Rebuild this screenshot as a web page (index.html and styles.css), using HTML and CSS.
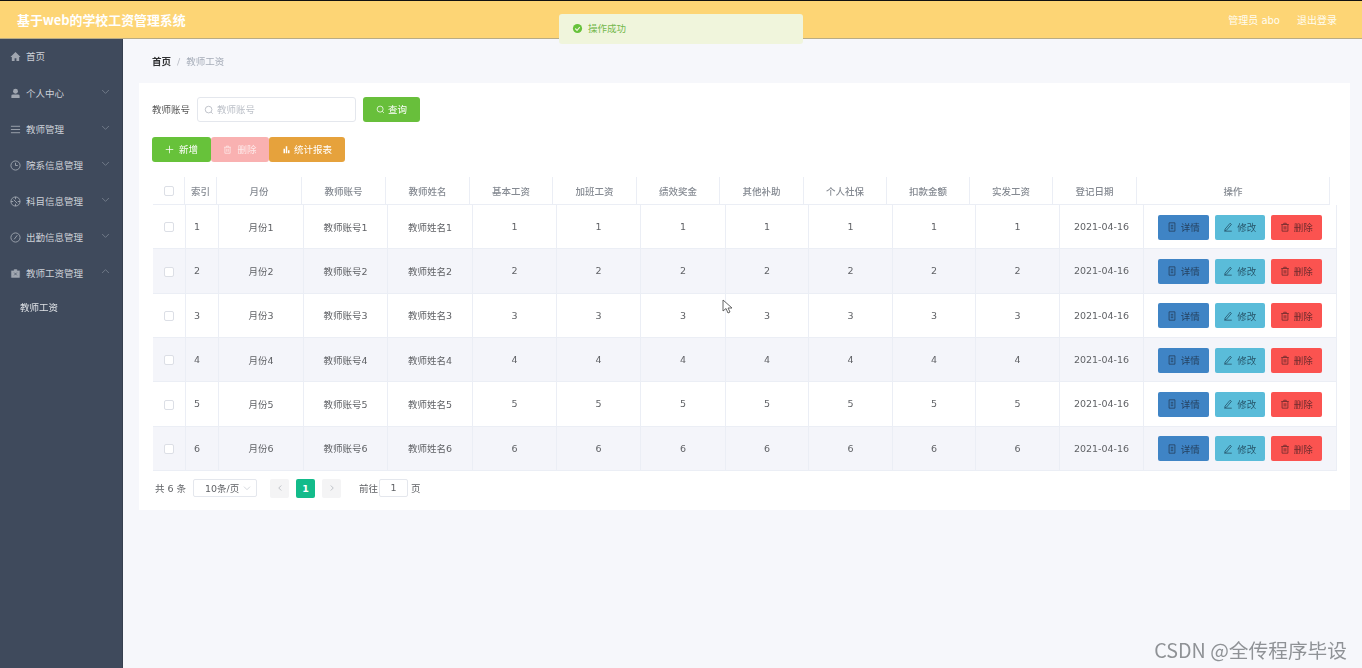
FILE: index.html
```html
<!DOCTYPE html>
<html lang="zh-CN">
<head>
  <meta charset="UTF-8">
  <meta name="viewport" content="width=device-width, initial-scale=1.0">
  <title>教师工资</title>
  <link rel="stylesheet" href="styles.css">
</head>
<body>
  <svg class="sprites" aria-hidden="true">
    <symbol id="i-doc" viewBox="0 0 12 12"><path d="M2.500 1h7v10h-7zM4.500 4h3M4.500 6h3M4.500 8h3" fill="none" stroke="currentColor"/></symbol>
    <symbol id="i-edit" viewBox="0 0 12 12"><path d="M2.500 8.500 8.500 1.500l1.600 1.400-6 7-2 .4zM1.500 11h9" fill="none" stroke="currentColor"/></symbol>
    <symbol id="i-del" viewBox="0 0 12 12"><path d="M1.500 3h9M4.500 3V1.500h3V3M2.500 3v8h7V3M5 5v4M7 5v4" fill="none" stroke="currentColor"/></symbol>
    <symbol id="i-search" viewBox="0 0 12 12"><circle cx="5.500" cy="5.500" r="4" fill="none" stroke="currentColor"/><path d="m8.500 8.500 2 2" stroke="currentColor"/></symbol>
    <symbol id="i-down" viewBox="0 0 12 12"><path d="m1.500 4 4.500 4.500L10.500 4" fill="none" stroke="currentColor"/></symbol>
    <symbol id="i-up" viewBox="0 0 12 12"><path d="M1.500 8 6 3.500 10.500 8" fill="none" stroke="currentColor"/></symbol>
  </svg>

  <header class="topbar">
    <div class="topbar-title">基于web的学校工资管理系统</div>
    <div class="topbar-user">
      <span>管理员 abo</span>
      <span>退出登录</span>
    </div>
  </header>

  <div class="layout">
    <aside class="sidebar">
      <div class="menu-item">
        <svg class="menu-icon" viewBox="0 0 12 12"><path d="M6 1 .5 6.500H2V11h3V8h2v3h3V6.500h1.500z" fill="currentColor"/></svg>
        <span>首页</span>
      </div>
      <div class="menu-item">
        <svg class="menu-icon" viewBox="0 0 12 12"><circle cx="6" cy="3.500" r="2.700" fill="currentColor"/><path d="M1.500 11V8.500Q1.500 7 3.500 7h5q2 0 2 1.500V11z" fill="currentColor"/></svg>
        <span>个人中心</span>
        <svg class="menu-arrow"><use href="#i-down"/></svg>
      </div>
      <div class="menu-item">
        <svg class="menu-icon" viewBox="0 0 12 12"><path d="M1 2.500h10M1 6h10M1 9.500h10" stroke="currentColor" fill="none"/></svg>
        <span>教师管理</span>
        <svg class="menu-arrow"><use href="#i-down"/></svg>
      </div>
      <div class="menu-item">
        <svg class="menu-icon" viewBox="0 0 12 12"><circle cx="6" cy="6" r="5" fill="none" stroke="currentColor"/><path d="M6 3v3h2.500" fill="none" stroke="currentColor"/></svg>
        <span>院系信息管理</span>
        <svg class="menu-arrow"><use href="#i-down"/></svg>
      </div>
      <div class="menu-item">
        <svg class="menu-icon" viewBox="0 0 12 12"><circle cx="6" cy="6" r="5" fill="none" stroke="currentColor"/><path d="M6 1v2.500M6 8.500V11M1 6h2.500M8.500 6H11M4 4l4 4" fill="none" stroke="currentColor"/></svg>
        <span>科目信息管理</span>
        <svg class="menu-arrow"><use href="#i-down"/></svg>
      </div>
      <div class="menu-item">
        <svg class="menu-icon" viewBox="0 0 12 12"><circle cx="6" cy="6" r="5" fill="none" stroke="currentColor"/><path d="M4.500 8 8 3.500" fill="none" stroke="currentColor"/></svg>
        <span>出勤信息管理</span>
        <svg class="menu-arrow"><use href="#i-down"/></svg>
      </div>
      <div class="menu-item">
        <svg class="menu-icon" viewBox="0 0 12 12"><path d="M4 2.500V1h4v1.500h3V11H1V2.500zM4.500 5l3 3M7.500 5l-3 3" fill="currentColor" stroke="#3f4a5c" stroke-width=".7"/></svg>
        <span>教师工资管理</span>
        <svg class="menu-arrow"><use href="#i-up"/></svg>
      </div>
      <div class="submenu-item">教师工资</div>
    </aside>

    <main class="content">
      <nav class="breadcrumb">
        <b>首页</b><i>/</i><span>教师工资</span>
      </nav>

      <section class="card">
        <div class="search-row">
          <label class="search-label" for="account">教师账号</label>
          <div class="search-input">
            <svg class="search-icon"><use href="#i-search"/></svg>
            <input id="account" type="text" placeholder="教师账号">
          </div>
          <button class="btn btn-green btn-search"><svg><use href="#i-search"/></svg>查询</button>
        </div>

        <div class="action-row">
          <button class="btn btn-green btn-add"><svg viewBox="0 0 12 12"><path d="M6 1v10M1 6h10" stroke="currentColor"/></svg>新增</button>
          <button class="btn btn-pink btn-remove"><svg><use href="#i-del"/></svg>删除</button>
          <button class="btn btn-orange btn-chart"><svg viewBox="0 0 12 12"><path d="M2 5h2v6H2zM5 1.500h2V11H5zM8 7h2v4H8z" fill="currentColor"/></svg>统计报表</button>
        </div>

        <table class="grid grid-head">
          <colgroup><col><col><col><col><col><col><col><col><col><col><col><col><col><col></colgroup>
          <thead>
            <tr>
              <th><span class="check"></span></th>
              <th class="left">索引</th>
              <th>月份</th><th>教师账号</th><th>教师姓名</th><th>基本工资</th><th>加班工资</th><th>绩效奖金</th>
              <th>其他补助</th><th>个人社保</th><th>扣款金额</th><th>实发工资</th><th>登记日期</th><th>操作</th>
            </tr>
          </thead>
        </table>

        <table class="grid grid-body">
          <colgroup><col><col><col><col><col><col><col><col><col><col><col><col><col><col></colgroup>
          <tbody>
            <tr>
              <td><span class="check"></span></td><td class="left">1</td><td>月份1</td><td>教师账号1</td><td>教师姓名1</td>
              <td>1</td><td>1</td><td>1</td><td>1</td><td>1</td><td>1</td><td>1</td><td>2021-04-16</td>
              <td><div class="row-btns"><button class="mini mini-blue"><svg><use href="#i-doc"/></svg>详情</button><button class="mini mini-teal"><svg><use href="#i-edit"/></svg>修改</button><button class="mini mini-red"><svg><use href="#i-del"/></svg>删除</button></div></td>
            </tr>
            <tr>
              <td><span class="check"></span></td><td class="left">2</td><td>月份2</td><td>教师账号2</td><td>教师姓名2</td>
              <td>2</td><td>2</td><td>2</td><td>2</td><td>2</td><td>2</td><td>2</td><td>2021-04-16</td>
              <td><div class="row-btns"><button class="mini mini-blue"><svg><use href="#i-doc"/></svg>详情</button><button class="mini mini-teal"><svg><use href="#i-edit"/></svg>修改</button><button class="mini mini-red"><svg><use href="#i-del"/></svg>删除</button></div></td>
            </tr>
            <tr>
              <td><span class="check"></span></td><td class="left">3</td><td>月份3</td><td>教师账号3</td><td>教师姓名3</td>
              <td>3</td><td>3</td><td>3</td><td>3</td><td>3</td><td>3</td><td>3</td><td>2021-04-16</td>
              <td><div class="row-btns"><button class="mini mini-blue"><svg><use href="#i-doc"/></svg>详情</button><button class="mini mini-teal"><svg><use href="#i-edit"/></svg>修改</button><button class="mini mini-red"><svg><use href="#i-del"/></svg>删除</button></div></td>
            </tr>
            <tr>
              <td><span class="check"></span></td><td class="left">4</td><td>月份4</td><td>教师账号4</td><td>教师姓名4</td>
              <td>4</td><td>4</td><td>4</td><td>4</td><td>4</td><td>4</td><td>4</td><td>2021-04-16</td>
              <td><div class="row-btns"><button class="mini mini-blue"><svg><use href="#i-doc"/></svg>详情</button><button class="mini mini-teal"><svg><use href="#i-edit"/></svg>修改</button><button class="mini mini-red"><svg><use href="#i-del"/></svg>删除</button></div></td>
            </tr>
            <tr>
              <td><span class="check"></span></td><td class="left">5</td><td>月份5</td><td>教师账号5</td><td>教师姓名5</td>
              <td>5</td><td>5</td><td>5</td><td>5</td><td>5</td><td>5</td><td>5</td><td>2021-04-16</td>
              <td><div class="row-btns"><button class="mini mini-blue"><svg><use href="#i-doc"/></svg>详情</button><button class="mini mini-teal"><svg><use href="#i-edit"/></svg>修改</button><button class="mini mini-red"><svg><use href="#i-del"/></svg>删除</button></div></td>
            </tr>
            <tr>
              <td><span class="check"></span></td><td class="left">6</td><td>月份6</td><td>教师账号6</td><td>教师姓名6</td>
              <td>6</td><td>6</td><td>6</td><td>6</td><td>6</td><td>6</td><td>6</td><td>2021-04-16</td>
              <td><div class="row-btns"><button class="mini mini-blue"><svg><use href="#i-doc"/></svg>详情</button><button class="mini mini-teal"><svg><use href="#i-edit"/></svg>修改</button><button class="mini mini-red"><svg><use href="#i-del"/></svg>删除</button></div></td>
            </tr>
          </tbody>
        </table>

        <div class="pager">
          <span class="pager-total">共 6 条</span>
          <div class="pager-size"><span>10条/页</span><svg><use href="#i-down"/></svg></div>
          <div class="pager-nav"><svg viewBox="0 0 12 12"><path d="M7.500 3 4.500 6l3 3" fill="none" stroke="currentColor"/></svg></div>
          <div class="pager-nav pager-current">1</div>
          <div class="pager-nav"><svg viewBox="0 0 12 12"><path d="m4.500 3 3 3-3 3" fill="none" stroke="currentColor"/></svg></div>
          <span class="pager-goto">前往</span>
          <div class="pager-input">1</div>
          <span class="pager-page">页</span>
        </div>
      </section>
    </main>
  </div>

  <div class="toast">
    <svg viewBox="0 0 12 12"><circle cx="6" cy="6" r="5" fill="#67c23a"/><path d="m3.500 6 2 2 3-3.500" fill="none" stroke="#f0f5dc" stroke-width="1.200"/></svg>
    <span>操作成功</span>
  </div>

  <svg class="cursor" viewBox="0 0 11 15"><path d="M1 1v11l3-2.500 2 4.500 2-1-2-4h4z" fill="#fff" stroke="#555" stroke-width=".9"/></svg>

  <div class="watermark">CSDN @全传程序毕设</div>
</body>
</html>
```

FILE: styles.css
```css
* {
  box-sizing: border-box;
}

html, body {
  height: 100%;
}

body {
  margin: 0;
  font-family: "DejaVu Sans", "Noto Sans CJK SC", sans-serif;
  font-size: 9.5px;
  color: #606266;
  background-color: #f6f7fb;
  border-top: 1px solid #111;
  overflow: hidden;
  display: flex;
  flex-direction: column;
  filter: blur(.4px);
}

.sprites {
  display: none;
}

button {
  font-family: inherit;
  cursor: pointer;
}

/* top bar */
.topbar {
  height: 38px;
  flex: none;
  display: flex;
  justify-content: space-between;
  align-items: center;
  padding: 0 25px 0 17px;
  background-color: #fdd575;
  border-bottom: 1px solid #b8ac86;
  color: #fff;
}

.topbar-title {
  font-family: "Noto Sans CJK SC", sans-serif;
  font-size: 12.9px;
  font-weight: 700;
}

.topbar-user {
  display: flex;
  gap: 17px;
  font-size: 10px;
  color: #fffdf2;
}

.layout {
  flex: 1;
  display: flex;
  min-height: 0;
}

/* sidebar */
.sidebar {
  width: 123px;
  flex: none;
  background-color: #3f4a5c;
  border-right: 1px solid #36404f;
  color: #cdd1d8;
}

.menu-item {
  height: 36px;
  display: flex;
  align-items: center;
  gap: 5px;
  padding: 0 12px 0 10px;
}

.menu-item:first-child {
  padding-bottom: 2px;
}

.menu-item span {
  flex: 1;
}

.menu-icon {
  width: 11px;
  height: 11px;
  color: #a0a6b0;
  flex: none;
}

.menu-arrow {
  width: 9px;
  height: 9px;
  color: #7f8896;
  margin-top: -3px;
  flex: none;
}

.submenu-item {
  padding: 0 0 0 20px;
  height: 33px;
  line-height: 33px;
  color: #dfe2e6;
}

/* content */
.content {
  flex: 1;
  padding: 0 12px 0 16px;
  min-width: 0;
}

.breadcrumb {
  height: 44px;
  padding: 0 0 0 13px;
  display: flex;
  align-items: center;
  gap: 6px;
  color: #a6adb9;
}

.breadcrumb b {
  color: #303133;
  font-weight: 700;
}

.breadcrumb i {
  font-style: normal;
  color: #b9bdc5;
}

.card {
  height: 427px;
  padding: 14px 13px 0 14px;
  background-color: #fff;
}

.search-row {
  display: flex;
  align-items: center;
  height: 25px;
  margin-left: -1px;
}

.search-label {
  width: 45px;
  padding-bottom: 1px;
  color: #555;
}

.search-input {
  width: 159px;
  height: 25px;
  display: flex;
  align-items: center;
  gap: 3px;
  padding-left: 6px;
  border: 1px solid #e4e7ed;
  border-radius: 3px;
}

.search-icon {
  width: 10px;
  height: 10px;
  color: #b4b8c0;
}

.search-input input {
  width: 120px;
  border: 0;
  padding: 0;
  outline: 0;
  font: inherit;
}

.search-input input::placeholder {
  color: #bcc0c8;
}

.btn {
  height: 25px;
  display: flex;
  align-items: center;
  justify-content: center;
  gap: 3px;
  padding: 0 0 1px;
  border: 0;
  border-radius: 3px;
  font-size: 9.5px;
  color: #fff;
}

.btn svg {
  width: 9px;
  height: 9px;
}

.btn-green {
  background-color: #67c23a;
}

.btn-pink {
  background-color: #f9b1b1;
  color: #fde9e9;
}

.btn-orange {
  background-color: #e6a23c;
}

.btn-search {
  width: 57px;
  margin-left: 7px;
  background-color: #68bf3b;
}

.action-row {
  display: flex;
  margin: 15px 0 0 -1px;
}

.btn-add {
  width: 59px;
  gap: 5px;
}

.btn-remove {
  width: 58px;
  gap: 5px;
}

.btn-chart {
  width: 76px;
}

/* table */
.grid {
  table-layout: fixed;
  border-collapse: separate;
  border-spacing: 0;
  text-align: center;
}

.grid th, .grid td {
  padding: 0;
  font-weight: 400;
  border-bottom: 1px solid #ebeef5;
  border-right: 1px solid #ebeef5;
}

.grid .left {
  text-align: left;
}

.grid-head {
  width: 1177px;
  margin-top: 15px;
}

.grid-head th {
  height: 28px;
  color: #858a92;
  font-weight: 500;
}

.grid-head th.left {
  padding-left: 6px;
}

.grid-head col:nth-child(1) { width: 32px; }
.grid-head col:nth-child(2) { width: 32px; }
.grid-head col:nth-child(3) { width: 85px; }
.grid-head col:nth-child(4) { width: 84px; }
.grid-head col:nth-child(5) { width: 84px; }
.grid-head col:nth-child(6) { width: 83px; }
.grid-head col:nth-child(7) { width: 84px; }
.grid-head col:nth-child(8) { width: 83px; }
.grid-head col:nth-child(9) { width: 84px; }
.grid-head col:nth-child(10) { width: 83px; }
.grid-head col:nth-child(11) { width: 83px; }
.grid-head col:nth-child(12) { width: 83px; }
.grid-head col:nth-child(13) { width: 84px; }
.grid-head col:nth-child(14) { width: 193px; }

.grid-body {
  width: 1184px;
}

.grid-body td {
  height: 44.33px;
}

.grid-body td.left {
  padding-left: 8px;
}

.grid-body tr:nth-child(even) td {
  background-color: #f4f5fa;
}

.grid-body col:nth-child(1) { width: 33px; }
.grid-body col:nth-child(2) { width: 33px; }
.grid-body col:nth-child(3) { width: 85px; }
.grid-body col:nth-child(4) { width: 84px; }
.grid-body col:nth-child(5) { width: 85px; }
.grid-body col:nth-child(6) { width: 84px; }
.grid-body col:nth-child(7) { width: 84px; }
.grid-body col:nth-child(8) { width: 85px; }
.grid-body col:nth-child(9) { width: 83px; }
.grid-body col:nth-child(10) { width: 84px; }
.grid-body col:nth-child(11) { width: 83px; }
.grid-body col:nth-child(12) { width: 84px; }
.grid-body col:nth-child(13) { width: 84px; }
.grid-body col:nth-child(14) { width: 193px; }

.check {
  display: inline-block;
  width: 10px;
  height: 10px;
  vertical-align: middle;
  background-color: #fff;
  border: 1px solid #dcdfe6;
  border-radius: 2px;
}

.row-btns {
  display: flex;
  gap: 6px;
  padding: 1px 0 0 14px;
}

.mini {
  width: 50.5px;
  height: 25px;
  display: flex;
  align-items: center;
  justify-content: center;
  gap: 4px;
  padding: 0;
  border: 0;
  border-radius: 2px;
  font-size: 9.5px;
}

.mini svg {
  width: 10px;
  height: 10px;
}

.mini-blue {
  background-color: #3f84c5;
  color: #25415f;
}

.mini-teal {
  background-color: #5abcd9;
  color: #27566b;
}

.mini-red {
  background-color: #fb5350;
  color: #702c2e;
}

/* pagination */
.pager {
  display: flex;
  align-items: center;
  height: 19px;
  margin-top: 8px;
  padding-left: 2px;
}

.pager-total {
  width: 38px;
}

.pager-size {
  width: 64px;
  height: 18px;
  display: flex;
  align-items: center;
  justify-content: space-between;
  padding: 0 5px 0 11px;
  border: 1px solid #e4e7ed;
  border-radius: 2px;
}

.pager-size svg {
  width: 8px;
  height: 8px;
  color: #c0c4cc;
}

.pager-nav {
  width: 19px;
  height: 19px;
  margin-left: 7px;
  display: flex;
  align-items: center;
  justify-content: center;
  background-color: #f4f4f5;
  border-radius: 2px;
  color: #b5b8be;
}

.pager-nav svg {
  width: 10px;
  height: 10px;
}

.pager-size + .pager-nav {
  margin-left: 13px;
}

.pager-current {
  background-color: #13bb8a;
  color: #fff;
  font-weight: 700;
}

.pager-goto {
  width: 20px;
  margin-left: 18px;
}

.pager-input {
  width: 29px;
  height: 18px;
  margin-right: 3px;
  line-height: 16px;
  text-align: center;
  border: 1px solid #e4e7ed;
  border-radius: 2px;
}

/* things lying on top of the page */
.toast {
  position: absolute;
  left: 559px;
  top: 13px;
  width: 244px;
  height: 30px;
  display: flex;
  align-items: center;
  gap: 5px;
  padding: 0 0 2px 13px;
  background-color: #f0f5dc;
  border-radius: 3px;
  color: #74b84d;
}

.toast svg {
  width: 11px;
  height: 11px;
}

.cursor {
  position: absolute;
  left: 722px;
  top: 298px;
  width: 11px;
  height: 15px;
}

.watermark {
  position: absolute;
  right: 15px;
  top: 634px;
  font-family: "Noto Sans CJK SC", sans-serif;
  font-size: 19.7px;
  line-height: 30px;
  color: #8f9296;
}
```
